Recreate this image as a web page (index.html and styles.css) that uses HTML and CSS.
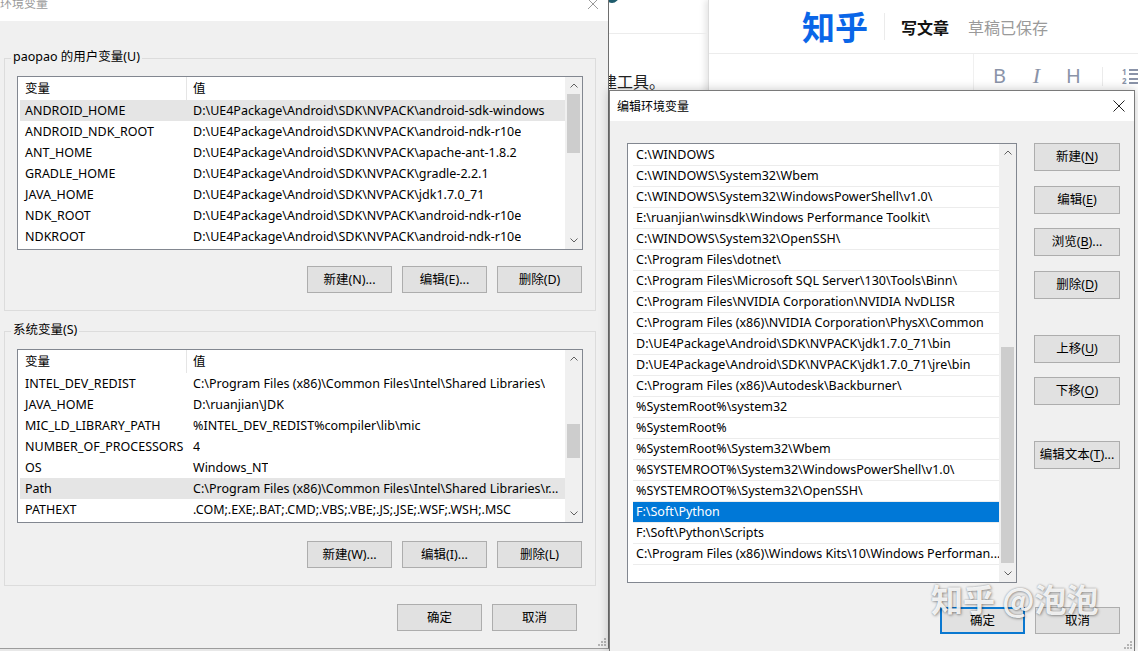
FILE: index.html
```html
<!DOCTYPE html>
<html lang="zh-CN">
<head>
<meta charset="utf-8">
<title>环境变量</title>
<link rel="stylesheet" href="styles.css">
</head>
<body>
<div class="browser">
  <div class="pl">
    <div class="pl-blob"></div>
    <div class="pl-head"></div>
    <div class="pl-text">建工具。</div>
  </div>
  <div class="editor">
    <div class="ed-head">
      <span class="logo">知乎</span>
      <span class="ed-div"></span>
      <span class="write">写文章</span>
      <span class="saved">草稿已保存</span>
    </div>
    <div class="toolbar">
      <div class="tb">
        <span class="tb-i tb-b">B</span>
        <span class="tb-i tb-it">I</span>
        <span class="tb-i tb-h">H</span>
        <span class="tb-div"></span>
        <span class="tb-ol">
          <span class="ol-line"><span class="ol-n">1</span><span class="ol-bars"></span></span>
          <span class="ol-line"><span class="ol-n">2</span><span class="ol-bars"></span></span>
        </span>
      </div>
    </div>
  </div>
</div>

<div class="win env">
  <div class="env-title">
    <span class="env-t">环境变量</span>
    <svg class="x-gray" width="12" height="11" viewBox="0 0 12 11"><path d="M1 0 L11 10 M11 0 L1 10" stroke="#9a9a9a" stroke-width="1" fill="none"/></svg>
  </div>
  <div class="env-body">
    <div class="group">
      <div class="legend">paopao 的用户变量(U)</div>
      <div class="list">
        <div class="rows">
          <div class="hdr"><span class="c1">变量</span><span class="c2">值</span></div>
          <div class="row sel"><span class="c1">ANDROID_HOME</span><span class="c2">D:\UE4Package\Android\SDK\NVPACK\android-sdk-windows</span></div>
          <div class="row"><span class="c1">ANDROID_NDK_ROOT</span><span class="c2">D:\UE4Package\Android\SDK\NVPACK\android-ndk-r10e</span></div>
          <div class="row"><span class="c1">ANT_HOME</span><span class="c2">D:\UE4Package\Android\SDK\NVPACK\apache-ant-1.8.2</span></div>
          <div class="row"><span class="c1">GRADLE_HOME</span><span class="c2">D:\UE4Package\Android\SDK\NVPACK\gradle-2.2.1</span></div>
          <div class="row"><span class="c1">JAVA_HOME</span><span class="c2">D:\UE4Package\Android\SDK\NVPACK\jdk1.7.0_71</span></div>
          <div class="row"><span class="c1">NDK_ROOT</span><span class="c2">D:\UE4Package\Android\SDK\NVPACK\android-ndk-r10e</span></div>
          <div class="row"><span class="c1">NDKROOT</span><span class="c2">D:\UE4Package\Android\SDK\NVPACK\android-ndk-r10e</span></div>
        </div>
        <div class="vs">
          <div class="arr"><svg width="8" height="5" viewBox="0 0 8 5"><path d="M0.5 4.5 L4 1 L7.5 4.5" stroke="#606060" fill="none"/></svg></div>
          <div class="track"><div class="thumb thumb-u"></div></div>
          <div class="arr"><svg width="8" height="5" viewBox="0 0 8 5"><path d="M0.5 0.5 L4 4 L7.5 0.5" stroke="#606060" fill="none"/></svg></div>
        </div>
      </div>
      <div class="btnrow">
        <div class="btn">新建(N)...</div>
        <div class="btn">编辑(E)...</div>
        <div class="btn">删除(D)</div>
      </div>
    </div>

    <div class="group g2">
      <div class="legend">系统变量(S)</div>
      <div class="list">
        <div class="rows">
          <div class="hdr"><span class="c1">变量</span><span class="c2">值</span></div>
          <div class="row"><span class="c1">INTEL_DEV_REDIST</span><span class="c2">C:\Program Files (x86)\Common Files\Intel\Shared Libraries\</span></div>
          <div class="row"><span class="c1">JAVA_HOME</span><span class="c2">D:\ruanjian\JDK</span></div>
          <div class="row"><span class="c1">MIC_LD_LIBRARY_PATH</span><span class="c2">%INTEL_DEV_REDIST%compiler\lib\mic</span></div>
          <div class="row"><span class="c1">NUMBER_OF_PROCESSORS</span><span class="c2">4</span></div>
          <div class="row"><span class="c1">OS</span><span class="c2">Windows_NT</span></div>
          <div class="row sel"><span class="c1">Path</span><span class="c2">C:\Program Files (x86)\Common Files\Intel\Shared Libraries\r...</span></div>
          <div class="row"><span class="c1">PATHEXT</span><span class="c2">.COM;.EXE;.BAT;.CMD;.VBS;.VBE;.JS;.JSE;.WSF;.WSH;.MSC</span></div>
        </div>
        <div class="vs">
          <div class="arr"><svg width="8" height="5" viewBox="0 0 8 5"><path d="M0.5 4.5 L4 1 L7.5 4.5" stroke="#606060" fill="none"/></svg></div>
          <div class="track"><div class="thumb thumb-s"></div></div>
          <div class="arr"><svg width="8" height="5" viewBox="0 0 8 5"><path d="M0.5 0.5 L4 4 L7.5 0.5" stroke="#606060" fill="none"/></svg></div>
        </div>
      </div>
      <div class="btnrow">
        <div class="btn">新建(W)...</div>
        <div class="btn">编辑(I)...</div>
        <div class="btn">删除(L)</div>
      </div>
    </div>

    <div class="foot">
      <div class="btn">确定</div>
      <div class="btn">取消</div>
    </div>
  </div>
  <svg class="grip" width="8" height="8" viewBox="0 0 8 8"><g fill="#b4b4b4"><rect x="6" y="0" width="2" height="2"/><rect x="3" y="3" width="2" height="2"/><rect x="6" y="3" width="2" height="2"/><rect x="0" y="6" width="2" height="2"/><rect x="3" y="6" width="2" height="2"/><rect x="6" y="6" width="2" height="2"/></g></svg>
</div>

<div class="win edit">
  <div class="edit-title">
    <span>编辑环境变量</span>
    <svg width="12" height="12" viewBox="0 0 12 12"><path d="M0.5 0.5 L11.5 11.5 M11.5 0.5 L0.5 11.5" stroke="#222" stroke-width="1" fill="none"/></svg>
  </div>
  <div class="edit-body">
    <div class="edit-main">
      <div class="elist">
        <div class="erows">
          <div class="erow">C:\WINDOWS</div>
          <div class="erow">C:\WINDOWS\System32\Wbem</div>
          <div class="erow">C:\WINDOWS\System32\WindowsPowerShell\v1.0\</div>
          <div class="erow">E:\ruanjian\winsdk\Windows Performance Toolkit\</div>
          <div class="erow">C:\WINDOWS\System32\OpenSSH\</div>
          <div class="erow">C:\Program Files\dotnet\</div>
          <div class="erow">C:\Program Files\Microsoft SQL Server\130\Tools\Binn\</div>
          <div class="erow">C:\Program Files\NVIDIA Corporation\NVIDIA NvDLISR</div>
          <div class="erow">C:\Program Files (x86)\NVIDIA Corporation\PhysX\Common</div>
          <div class="erow">D:\UE4Package\Android\SDK\NVPACK\jdk1.7.0_71\bin</div>
          <div class="erow">D:\UE4Package\Android\SDK\NVPACK\jdk1.7.0_71\jre\bin</div>
          <div class="erow">C:\Program Files (x86)\Autodesk\Backburner\</div>
          <div class="erow">%SystemRoot%\system32</div>
          <div class="erow">%SystemRoot%</div>
          <div class="erow">%SystemRoot%\System32\Wbem</div>
          <div class="erow">%SYSTEMROOT%\System32\WindowsPowerShell\v1.0\</div>
          <div class="erow">%SYSTEMROOT%\System32\OpenSSH\</div>
          <div class="erow sel">F:\Soft\Python</div>
          <div class="erow">F:\Soft\Python\Scripts</div>
          <div class="erow">C:\Program Files (x86)\Windows Kits\10\Windows Performan...</div>
        </div>
        <div class="vs">
          <div class="arr"><svg width="8" height="5" viewBox="0 0 8 5"><path d="M0.5 4.5 L4 1 L7.5 4.5" stroke="#606060" fill="none"/></svg></div>
          <div class="track"><div class="thumb thumb-e"></div></div>
          <div class="arr"><svg width="8" height="5" viewBox="0 0 8 5"><path d="M0.5 0.5 L4 4 L7.5 0.5" stroke="#606060" fill="none"/></svg></div>
        </div>
      </div>
      <div class="ebtns">
        <div class="btn">新建(<u>N</u>)</div>
        <div class="btn">编辑(<u>E</u>)</div>
        <div class="btn">浏览(<u>B</u>)...</div>
        <div class="btn">删除(<u>D</u>)</div>
        <div class="btn lg">上移(<u>U</u>)</div>
        <div class="btn">下移(<u>O</u>)</div>
        <div class="btn lg">编辑文本(<u>T</u>)...</div>
      </div>
    </div>
    <div class="efoot">
      <div class="btn def">确定</div>
      <div class="btn">取消</div>
    </div>
  </div>
  <svg class="grip" width="8" height="8" viewBox="0 0 8 8"><g fill="#b4b4b4"><rect x="6" y="0" width="2" height="2"/><rect x="3" y="3" width="2" height="2"/><rect x="6" y="3" width="2" height="2"/><rect x="0" y="6" width="2" height="2"/><rect x="3" y="6" width="2" height="2"/><rect x="6" y="6" width="2" height="2"/></g></svg>
</div>

<div class="watermark">知乎 @泡泡</div>
</body>
</html>
```

FILE: styles.css
```css
* { box-sizing: border-box; }
html, body { margin: 0; padding: 0; }
body {
  width: 1138px;
  height: 651px;
  overflow: hidden;
  position: relative;
  background: #e8e8e8;
  font-family: "Noto Sans", "Noto Sans CJK SC", sans-serif;
  font-size: 12.5px;
  color: #000;
}

/* ---------- background browser page ---------- */
.browser {
  position: absolute;
  left: 609px;
  top: 0;
  right: 0;
  bottom: 0;
  background: #fff;
  display: flex;
}
.pl {
  width: 99px;
  flex: none;
  overflow: hidden;
  position: relative;
  display: flex;
  flex-direction: column;
}
.pl-blob {
  position: absolute;
  left: -4px;
  top: -12px;
  width: 14px;
  height: 15px;
  border-radius: 50%;
  background: #1e5b6c;
}
.pl-head {
  height: 34px;
  border-bottom: 1px solid #ececec;
  flex: none;
}
.pl-text {
  margin-top: 35px;
  margin-left: -8px;
  font-family: "Noto Sans CJK SC", sans-serif;
  font-size: 16px;
  line-height: 24px;
  color: #222;
  white-space: nowrap;
}
.editor {
  flex: 1;
  border-left: 1px solid #dcdcdc;
  box-shadow: -3px 0 6px rgba(0,0,0,0.10);
  background: #fff;
}
.ed-head {
  height: 54px;
  border-bottom: 1px solid #ececec;
  display: flex;
  align-items: center;
  padding-left: 93px;
  font-family: "Noto Sans CJK SC", sans-serif;
}
.logo {
  font-size: 33px;
  font-weight: 700;
  color: #0a66e8;
  line-height: 1;
}
.ed-div {
  width: 1px;
  height: 27px;
  background: #ebebeb;
  margin: 0 16px;
}
.write {
  font-size: 16px;
  font-weight: 600;
  color: #121212;
}
.saved {
  margin-left: 19px;
  font-size: 16px;
  color: #9a9a9a;
}
.toolbar {
  height: 44px;
  display: flex;
  padding-left: 264px;
}
.tb {
  border-left: 1px solid #f0f0f0;
  display: flex;
  align-items: center;
  padding-left: 7px;
}
.tb-i {
  width: 37px;
  text-align: center;
  color: #8a93a8;
  font-size: 20px;
  line-height: 24px;
}
.tb-it {
  font-family: "Liberation Serif", serif;
  font-style: italic;
  font-size: 22px;
}
.tb-div {
  width: 1px;
  height: 19px;
  background: #ebebeb;
  margin-left: 10px;
}
.tb-ol {
  margin-left: 19px;
  display: flex;
  flex-direction: column;
  gap: 1px;
}
.ol-line {
  display: flex;
  align-items: center;
  gap: 2px;
}
.ol-n {
  font-size: 8px;
  line-height: 8px;
  color: #8a93a8;
  font-weight: 700;
}
.ol-bars {
  width: 12px;
  height: 6px;
  border-top: 2px solid #8a93a8;
  border-bottom: 2px solid #8a93a8;
}

/* ---------- windows ---------- */
.win { position: absolute; }
.btn {
  width: 85px;
  height: 27px;
  background: #e1e1e1;
  border: 1px solid #adadad;
  display: flex;
  align-items: center;
  justify-content: center;
  font-size: 12.5px;
  line-height: 16px;
  white-space: nowrap;
  flex: none;
}
.btn u { text-underline-offset: 2px; }

.env {
  left: 0;
  top: 0;
  width: 609px;
  height: 649px;
  background: #f0f0f0;
  border-right: 1px solid #6e6e6e;
  border-bottom: 1px solid #9c9c9c;
  display: flex;
  flex-direction: column;
}
.env-title {
  height: 21px;
  flex: none;
  background: #fff;
  overflow: hidden;
  display: flex;
  justify-content: space-between;
  align-items: flex-start;
  padding-right: 9px;
}
.env-t {
  font-size: 12px;
  line-height: 16px;
  margin-top: -4px;
  color: #9a9a9a;
}
.x-gray { margin-top: -1px; }
.env-body {
  padding: 37px 12px 0 4px;
  display: flex;
  flex-direction: column;
}
.group {
  border: 1px solid #dcdcdc;
  padding: 0 12px 17px 12px;
  display: flex;
  flex-direction: column;
}
.g2 { margin-top: 20px; }
.legend {
  align-self: flex-start;
  margin-top: -11px;
  margin-left: -6px;
  padding: 0 2px;
  line-height: 18px;
  background: #f0f0f0;
}
.list {
  margin-top: 10px;
  height: 174px;
  border: 1px solid #828790;
  background: #fff;
  display: flex;
}
.rows {
  flex: 1;
  padding-left: 2px;
  overflow: hidden;
}
.hdr, .row {
  display: flex;
  white-space: nowrap;
}
.hdr { height: 23px; line-height: 23px; }
.row { height: 21px; line-height: 21px; }
.row.sel { background: #e5e5e5; }
.c1 {
  width: 166px;
  flex: none;
  padding-left: 5px;
  overflow: hidden;
}
.c2 {
  border-left: 1px solid transparent;
  padding-left: 6px;
  overflow: hidden;
}
.hdr .c2 { border-left-color: #e5e5e5; }

.vs {
  width: 17px;
  flex: none;
  background: #f0f0f0;
  display: flex;
  flex-direction: column;
}
.arr {
  height: 17px;
  flex: none;
  display: flex;
  align-items: center;
  justify-content: center;
}
.track { flex: 1; }
.thumb {
  margin: 0 2px;
  background: #cdcdcd;
}
.thumb-u { margin-top: 0; height: 59px; }
.thumb-s { margin-top: 57px; height: 34px; }
.thumb-e { margin-top: 186px; height: 216px; }

.btnrow {
  margin-top: 16px;
  display: flex;
  justify-content: flex-end;
  gap: 10px;
  padding-right: 1px;
}
.g2 .btnrow { margin-top: 18px; }
.foot {
  margin-top: 18px;
  display: flex;
  justify-content: flex-end;
  gap: 10px;
  padding-right: 19px;
}
.grip {
  position: absolute;
  right: 2px;
  bottom: 2px;
}

/* ---------- edit dialog ---------- */
.edit {
  left: 609px;
  top: 90px;
  width: 526px;
  height: 561px;
  background: #f0f0f0;
  border: 1px solid #7a7a7a;
  border-bottom: none;
  box-shadow: 0 0 10px rgba(0,0,0,0.22);
}
.edit-title {
  height: 30px;
  background: #fff;
  display: flex;
  align-items: center;
  justify-content: space-between;
  padding: 0 9px 0 7px;
  font-size: 12px;
}
.edit-body {
  padding: 22px 14px 0 17px;
}
.edit-main {
  display: flex;
  gap: 17px;
}
.elist {
  width: 390px;
  height: 440px;
  border: 1px solid #828790;
  background: #fff;
  display: flex;
}
.erows {
  flex: 1;
  padding: 1px 0 0 5px;
  overflow: hidden;
}
.erow {
  height: 21px;
  line-height: 20px;
  border-bottom: 1px solid #ececec;
  padding-left: 3px;
  white-space: nowrap;
  overflow: hidden;
}
.erow.sel {
  background: #0078d7;
  color: #fff;
}
.ebtns {
  display: flex;
  flex-direction: column;
  gap: 14.5px;
}
.ebtns .btn { width: 86px; height: 28px; }
.ebtns .btn.lg { margin-top: 21.5px; }
.efoot {
  margin-top: 24px;
  display: flex;
  justify-content: flex-end;
  gap: 10px;
}
.efoot .btn { height: 27px; }
.btn.def { border: 2px solid #0a78d0; }

/* ---------- watermark ---------- */
.watermark {
  position: absolute;
  left: 931px;
  top: 578px;
  font-family: "Noto Sans CJK SC", sans-serif;
  font-size: 32px;
  font-weight: 700;
  line-height: 40px;
  color: rgba(255,255,255,0.9);
  text-shadow: 0 0 2px rgba(0,0,0,0.35), 1px 1px 3px rgba(0,0,0,0.3);
  white-space: nowrap;
}
```
